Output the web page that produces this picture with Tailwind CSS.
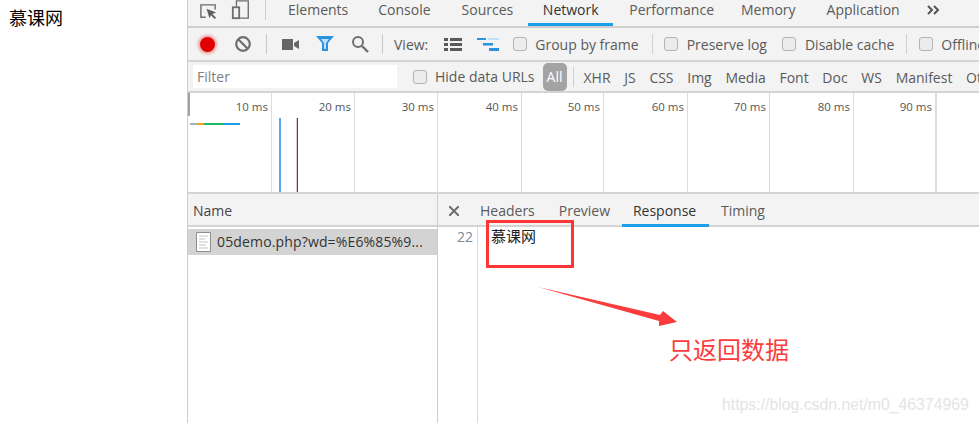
<!DOCTYPE html>
<html lang="zh">
<head>
    <meta charset="UTF-8">
    <title>慕课网</title>
    <script src="https://cdn.jsdelivr.net/npm/@tailwindcss/browser@4"></script>
</head>
<body class="relative w-[979px] h-[423px] overflow-hidden bg-white flex font-['Open_Sans',sans-serif]">
    <!-- Page -->
    <div class="w-[187px] shrink-0 pl-[9px] pt-[4px] text-[18px] leading-[26px] text-black font-['Noto_Sans_CJK_SC',sans-serif]">慕课网</div>

    <!-- DevTools -->
    <div class="w-[792px] h-full flex flex-col border-l border-[#cdcdcd] text-[14px] text-[#5a5a5a] whitespace-nowrap overflow-hidden">
        <!-- Tabs -->
        <div class="h-[28px] shrink-0 flex bg-[#f3f3f3] border-b-2 border-[#cfcfcf]">
            <div class="flex items-start w-[90px] shrink-0 pl-[11px]">
                <svg width="19" height="19" viewBox="0 0 20 20" fill="none" class="mt-[2px] shrink-0"><path d="M7 16H2V3h15v5" stroke="#6e6e6e" stroke-width="1.5"/><path d="M8 7l10 4-4 1.5 4 4-1.500 1.500-4-4L11 17z" fill="#5f5f5f"/></svg>
                <svg width="20" height="20" viewBox="0 0 20 22" fill="none" class="ml-[13px] shrink-0"><path d="M5 7V1h13v19H9" stroke="#6e6e6e" stroke-width="1.500"/><rect x="1" y="8" width="7" height="12" stroke="#6e6e6e" stroke-width="2"/></svg>
                <div class="w-px h-[20px] bg-[#cfcfcf] ml-[14px] shrink-0"></div>
            </div>
            <div class="flex items-start leading-[19px] -ml-[1px]">
                <div class="ml-[11px] mr-[30px]">Elements</div>
                <div class="mr-[31px]">Console</div>
                <div class="mr-[15px]">Sources</div>
                <div class="w-[85px] h-[26px] text-center text-[#333] border-b-[3px] border-[#1a9fe8] box-border">Network</div>
                <div class="ml-[16px] mr-[27px]">Performance</div>
                <div class="mr-[31px]">Memory</div>
                <div class="mr-[27px]">Application</div>
                <svg width="12" height="10" viewBox="0 0 12 10" fill="none" class="mt-[5px] shrink-0"><path d="M1 1l4 4-4 4M7 1l4 4-4 4" stroke="#555" stroke-width="2"/></svg>
            </div>
        </div>

        <!-- Toolbar -->
        <div class="h-[34px] shrink-0 flex items-center bg-[#f3f3f3] border-b-2 border-[#d4d4d4] pl-[12px]">
            <div class="w-[15px] h-[15px] rounded-full bg-[#e00000] shadow-[0_0_3px_2px_rgba(224,0,0,0.35)] shrink-0"></div>
            <svg width="16" height="16" viewBox="0 0 16 16" fill="none" class="ml-[20px] shrink-0"><circle cx="8" cy="8" r="6.800" stroke="#6e6e6e" stroke-width="2.200"/><path d="M3 3l10 10" stroke="#6e6e6e" stroke-width="2.200"/></svg>
            <div class="w-px h-[20px] bg-[#c8c8c8] ml-[15px] shrink-0"></div>
            <svg width="17" height="11" viewBox="0 0 17 11" class="ml-[15px] shrink-0"><path d="M0 0h11v11H0zM12 4l5-3v9l-5-3z" fill="#666"/></svg>
            <svg width="18" height="16" viewBox="0 0 18 16" class="ml-[17px] shrink-0"><path d="M0 0h18l-6 7v8H6V7z" fill="#2a93e0"/><path d="M5 3h8l-3 4v6H8V7z" fill="#bfe0f7"/></svg>
            <svg width="18" height="18" viewBox="0 0 18 18" fill="none" class="ml-[17px] shrink-0"><circle cx="7" cy="7" r="5" stroke="#6e6e6e" stroke-width="2"/><path d="M11 11l6 6" stroke="#6e6e6e" stroke-width="2.400"/></svg>
            <div class="w-px h-[20px] bg-[#c8c8c8] ml-[13px] shrink-0"></div>
            <span class="ml-[11px]">View:</span>
            <svg width="18" height="13" viewBox="0 0 18 13" class="ml-[16px] shrink-0"><path d="M0 0h4v3H0zM6 0h12v3H6zM0 5h4v3H0zM6 5h12v3H6zM0 10h4v3H0zM6 10h12v3H6z" fill="#5a5a5a"/></svg>
            <svg width="22" height="13" viewBox="0 0 22 13" class="ml-[15px] shrink-0"><path d="M11 0h11v2H11z" fill="#bfe0f7"/><path d="M0 0h9v2H0z" fill="#2a93e0"/><path d="M6 5h10v2.500H6zM12 10h10v3H12z" fill="#2a93e0"/></svg>
            <span class="w-[14px] h-[14px] ml-[14px] rounded-[3px] border border-[#b4b4b4] bg-[#ececec] shrink-0"></span>
            <span class="ml-[8px]">Group by frame</span>
            <div class="w-px h-[20px] bg-[#d0d0d0] ml-[13px] shrink-0"></div>
            <span class="w-[14px] h-[14px] ml-[11px] rounded-[3px] border border-[#b4b4b4] bg-[#ececec] shrink-0"></span>
            <span class="ml-[9px]">Preserve log</span>
            <span class="w-[14px] h-[14px] ml-[15px] rounded-[3px] border border-[#b4b4b4] bg-[#ececec] shrink-0"></span>
            <span class="ml-[9px]">Disable cache</span>
            <div class="w-px h-[20px] bg-[#d0d0d0] ml-[12px] shrink-0"></div>
            <span class="w-[14px] h-[14px] ml-[12px] rounded-[3px] border border-[#b4b4b4] bg-[#ececec] shrink-0"></span>
            <span class="ml-[8px]">Offline</span>
        </div>

        <!-- Filter -->
        <div class="h-[31px] shrink-0 flex items-center bg-[#f3f3f3] border-b-2 border-[#d4d4d4] pl-[5px]">
            <div class="w-[204px] h-[23px] bg-white pl-[4px] leading-[23px] text-[#808080] shrink-0">Filter</div>
            <span class="w-[14px] h-[14px] ml-[16px] rounded-[3px] border border-[#b4b4b4] bg-[#ececec] shrink-0"></span>
            <span class="ml-[8px]">Hide data URLs</span>
            <span class="ml-[8px] w-[24px] h-[28px] mt-[1px] rounded-[5px] bg-[#a3a3a3] text-white text-center leading-[28px] shrink-0">All</span>
            <div class="w-px h-[20px] bg-[#d0d0d0] ml-[6px] shrink-0"></div>
            <div class="flex ml-[10px] mt-[1px] gap-[13.7px]">
                <span>XHR</span><span>JS</span><span>CSS</span><span>Img</span><span>Media</span><span>Font</span><span>Doc</span><span>WS</span><span>Manifest</span><span>Other</span>
            </div>
        </div>

        <!-- Overview -->
        <div class="relative h-[101px] shrink-0 bg-white border-b-2 border-[#d4d4d4] flex text-[11.5px] text-[#555] text-right leading-[16px]">
            <div class="w-[84px] shrink-0 border-r border-[#dcdcdc] pr-[3px] pt-[6px]">10 ms</div>
            <div class="w-[83px] shrink-0 border-r border-[#dcdcdc] pr-[3px] pt-[6px]">20 ms</div>
            <div class="w-[83px] shrink-0 border-r border-[#dcdcdc] pr-[3px] pt-[6px]">30 ms</div>
            <div class="w-[84px] shrink-0 border-r border-[#dcdcdc] pr-[3px] pt-[6px]">40 ms</div>
            <div class="w-[82px] shrink-0 border-r border-[#dcdcdc] pr-[3px] pt-[6px]">50 ms</div>
            <div class="w-[84px] shrink-0 border-r border-[#dcdcdc] pr-[3px] pt-[6px]">60 ms</div>
            <div class="w-[82px] shrink-0 border-r border-[#dcdcdc] pr-[3px] pt-[6px]">70 ms</div>
            <div class="w-[84px] shrink-0 border-r border-[#dcdcdc] pr-[3px] pt-[6px]">80 ms</div>
            <div class="w-[83px] shrink-0 border-r-2 border-[#dcdcdc] pr-[3px] pt-[6px]">90 ms</div>
            <!-- handle and waterfall marks -->
            <div class="absolute left-0 top-0 w-[2px] h-[23px] bg-[#a0a0a0]"></div>
            <div class="absolute left-[2px] top-[30px] flex h-[2px]">
                <div class="w-[7px] bg-[#b0b0b0]"></div>
                <div class="w-[7px] bg-[#f5a020]"></div>
                <div class="w-[20px] bg-[#1fb964]"></div>
                <div class="w-[16px] bg-[#1a9fe8]"></div>
            </div>
            <div class="absolute left-[91px] top-[25px] bottom-0 w-[2px] bg-[#5da5ee]"></div>
            <div class="absolute left-[108px] top-[25px] bottom-0 w-[2px] border-l border-[#e8c8c8] bg-[#a82020]"></div>
        </div>

        <!-- Split -->
        <div class="flex-1 flex min-h-0">
            <div class="w-[250px] shrink-0 border-r border-[#cdcdcd]">
                <div class="h-[33px] bg-[#f3f3f3] border-b-2 border-[#d4d4d4] pl-[5px] leading-[33px] text-[#444]">Name</div>
                <div class="h-[26px] mt-[2px] bg-[#d3d3d3] flex items-center pl-[8px] text-[#333]">
                    <svg width="15" height="20" viewBox="0 0 15 20" class="shrink-0"><path d="M.5.500h14v19H.5z" fill="#fff" stroke="#8d8d8d"/><path d="M3 4h9M3 7h6M3 10h9M3 13h7M3 16h9" stroke="#c4c4c4"/></svg>
                    <span class="ml-[6px] -mt-[2px] tracking-[0.15px]">05demo.php?wd=%E6%85%9...</span>
                </div>
            </div>
            <div class="flex-1 flex flex-col min-w-0">
                <div class="h-[33px] shrink-0 bg-[#f3f3f3] border-b-2 border-[#d4d4d4] flex leading-[33px]">
                    <svg width="10" height="10" viewBox="0 0 10 10" class="ml-[11px] mt-[12px] shrink-0"><path d="M0 0l10 10M10 0L0 10" stroke="#6e6e6e" stroke-width="2"/></svg>
                    <span class="ml-[21px]">Headers</span>
                    <span class="ml-[24px]">Preview</span>
                    <span class="ml-[12px] w-[87px] h-[33px] pr-[2px] text-center text-[#333] border-b-[3px] border-[#1a9fe8] box-border">Response</span>
                    <span class="ml-[12px]">Timing</span>
                </div>
                <div class="flex-1 flex min-h-0">
                    <div class="w-[40px] shrink-0 border-r border-[#dcdcdc] text-right pr-[4px] text-[14px] text-[#7d8a99] leading-[20px]">22</div>
                    <div class="pl-[13px] text-[15px] leading-[18px] text-[#222] font-['Noto_Sans_CJK_SC',sans-serif]">慕课网</div>
                </div>
            </div>
        </div>
    </div>

    <!-- Annotations over the screenshot -->
    <div class="absolute left-[486px] top-[220px] w-[88px] h-[48px] border-[3px] border-[#fc3535]"></div>
    <svg class="absolute left-[536px] top-[285px]" width="144" height="44" viewBox="0 0 144 44"><path d="M2 2L124 30L127 26L141 37L123 41L123 36z" fill="#fc3c3c"/></svg>
    <div class="absolute left-[669px] top-[331px] text-[24px] leading-[36px] text-[#fc3c3c] font-['Noto_Sans_CJK_SC',sans-serif]">只返回数据</div>
    <div class="absolute left-[722px] top-[394px] text-[15.8px] leading-[22px] text-[#e4e4e4] font-['Liberation_Sans',sans-serif]">https://blog.csdn.net/m0_46374969</div>
</body>
</html>
